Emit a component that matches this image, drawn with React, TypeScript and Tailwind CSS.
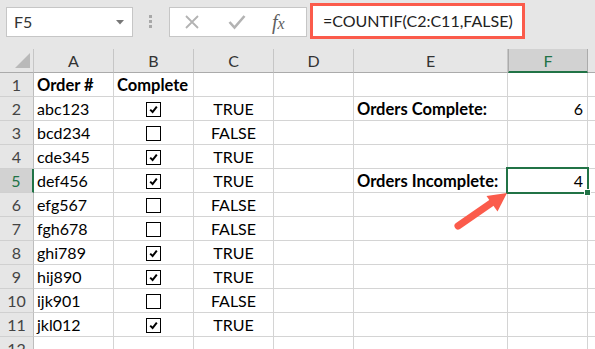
import React from "react";

const rows: { id: string; done: boolean }[] = [
  { id: "abc123", done: true },
  { id: "bcd234", done: false },
  { id: "cde345", done: true },
  { id: "def456", done: true },
  { id: "efg567", done: false },
  { id: "fgh678", done: false },
  { id: "ghi789", done: true },
  { id: "hij890", done: true },
  { id: "ijk901", done: false },
  { id: "jkl012", done: true },
];

function Check({ on }: { on: boolean }) {
  return (
    <div className="w-[15px] h-[15px] border-[1.5px] border-black bg-white flex items-center justify-center">
      {on && (
        <svg width="9" height="9" viewBox="0 0 9 9">
          <path d="M1.2 4.6 L3.6 7 L7.8 1.6" fill="none" stroke="#000" strokeWidth="2" />
        </svg>
      )}
    </div>
  );
}

const cell = "h-[24px] border-r border-b border-[#d4d4d4] leading-[23px] whitespace-nowrap overflow-visible text-black text-[16px]";
const rowHead = "h-[24px] border-r border-b border-r-[#bdbdbd] border-b-[#d0d0d0] bg-[#e6e6e6] text-center leading-[23px] text-[16px] text-[#444]";

export default function App() {
  const gridRows: React.ReactNode[] = [];
  for (let r = 1; r <= 12; r++) {
    const sel = r === 5;
    gridRows.push(
      <div
        key={`h${r}`}
        className={
          sel
            ? "h-[24px] border-r-2 border-b border-r-[#217346] border-b-[#d0d0d0] bg-[#d2d2d2] text-center leading-[23px] text-[16px] text-[#217346]"
            : rowHead
        }
      >
        {r}
      </div>
    );
    let a: React.ReactNode = "";
    let b: React.ReactNode = "";
    let c: React.ReactNode = "";
    let e: React.ReactNode = "";
    let f: React.ReactNode = "";
    if (r === 1) {
      a = <span className="font-bold text-[16.5px]">Order #</span>;
      b = <span className="font-bold text-[16.5px]">Complete</span>;
    } else if (r <= 11) {
      const d = rows[r - 2];
      a = d.id;
      b = (
        <div className="h-full flex items-center justify-center pt-[1px]">
          <Check on={d.done} />
        </div>
      );
      c = d.done ? "TRUE" : "FALSE";
    }
    if (r === 2) {
      e = <span className="font-bold text-[16.5px]">Orders Complete:</span>;
      f = "6";
    }
    if (r === 5) {
      e = <span className="font-bold text-[16.5px]">Orders Incomplete:</span>;
      f = "4";
    }
    gridRows.push(
      <div key={`a${r}`} className={`${cell} pl-[3px]`}>{a}</div>,
      <div key={`b${r}`} className={`${cell} ${r === 1 ? "pl-[3px]" : ""}`}>{b}</div>,
      <div key={`c${r}`} className={`${cell} text-center`}>{c}</div>,
      <div key={`d${r}`} className={cell}></div>,
      <div key={`e${r}`} className={`${cell} pl-[3px]`}>{e}</div>,
      <div key={`f${r}`} className={`${cell} text-right pr-[4px]`}>{f}</div>,
      <div key={`g${r}`} className="h-[24px] border-b border-[#d4d4d4]"></div>
    );
  }

  const colHead = "h-[24px] bg-[#e6e6e6] border-r border-r-[#c6c6c6] border-b border-b-[#ababab] text-center leading-[23px] text-[16px] text-[#333]";

  return (
    <div
      className="relative w-[595px] h-[349px] overflow-hidden bg-white"
      style={{ fontFamily: "Lato, 'Liberation Sans', sans-serif" }}
    >
      {/* toolbar */}
      <div className="h-[49px] bg-[#e6e6e6] flex items-start">
        <div className="ml-[6px] mt-[7px] w-[127px] h-[30px] bg-white border border-[#c6c6c6] flex items-center justify-between pl-[7px] pr-[8px]">
          <span className="text-[16px] text-[#333]">F5</span>
          <svg width="8" height="5" viewBox="0 0 8 5">
            <path d="M0 0 L8 0 L4 4.5 Z" fill="#777" />
          </svg>
        </div>
        <div className="ml-[16px] mt-[15px] flex flex-col gap-[2px]">
          <div className="w-[3px] h-[3px] bg-[#a8a8a8]" />
          <div className="w-[3px] h-[3px] bg-[#a8a8a8]" />
          <div className="w-[3px] h-[3px] bg-[#a8a8a8]" />
        </div>
        <div className="ml-[17px] mt-[7px] w-[138px] h-[30px] bg-white border border-[#c6c6c6] flex items-center">
          <svg className="ml-[14px]" width="16" height="16" viewBox="0 0 16 16">
            <path d="M2 2 L14 14 M14 2 L2 14" stroke="#b3b3b3" strokeWidth="1.8" />
          </svg>
          <svg className="ml-[28px]" width="18" height="16" viewBox="0 0 18 16">
            <path d="M1.5 8 L6.5 13.5 L16.5 2" fill="none" stroke="#b3b3b3" strokeWidth="2.6" />
          </svg>
          <span
            className="ml-[26px] italic text-[20px] text-[#606060] leading-none"
            style={{ fontFamily: "'Liberation Serif', serif" }}
          >
            f<span className="text-[16px]">x</span>
          </span>
        </div>
        <div className="ml-[3px] mt-[3px] w-[215px] h-[36px] border-[3px] border-[#fb5b4b] bg-white flex items-center pl-[10px]">
          <span className="text-[16px] text-[#222] whitespace-nowrap">=COUNTIF(C2:C11,FALSE)</span>
        </div>
      </div>

      {/* grid */}
      <div className="grid grid-cols-[34px_80px_80px_80px_80px_154px_80px_7px]">
        <div className="h-[24px] bg-[#e6e6e6] border-r border-r-[#c6c6c6] border-b border-b-[#ababab] flex items-end justify-end pr-[3px] pb-[4px]">
          <svg width="15" height="15" viewBox="0 0 15 15">
            <path d="M15 0 L15 15 L0 15 Z" fill="#b9b9b9" />
          </svg>
        </div>
        <div className={colHead}>A</div>
        <div className={colHead}>B</div>
        <div className={colHead}>C</div>
        <div className={colHead}>D</div>
        <div className={colHead}>E</div>
        <div className="h-[24px] bg-[#d2d2d2] border-x border-x-[#ababab] border-b-2 border-b-[#217346] text-center leading-[23px] text-[16px] text-[#217346]">
          F
        </div>
        <div className="h-[24px] bg-[#e6e6e6] border-b border-b-[#ababab]"></div>
        {gridRows}
      </div>

      {/* selection */}
      <div className="absolute left-[506px] top-[167px] w-[83px] h-[27px] border-2 border-[#217346] pointer-events-none" />
      <div className="absolute left-[584px] top-[189px] w-[7px] h-[7px] bg-[#217346] border border-white pointer-events-none" />

      {/* arrow */}
      <svg className="absolute left-0 top-0 pointer-events-none" width="595" height="349">
        <line x1="458" y1="226" x2="492" y2="202.5" stroke="#fb5b4b" strokeWidth="7" strokeLinecap="round" />
        <polygon points="507,193 486.5,196 497.5,211.5" fill="#fb5b4b" />
      </svg>
    </div>
  );
}
